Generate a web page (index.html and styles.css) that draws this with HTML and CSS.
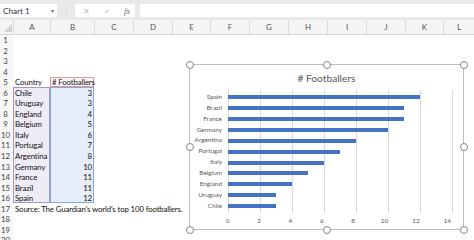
FILE: index.html
```html
<!DOCTYPE html>
<html>
<head>
<meta charset="utf-8">
<link rel="stylesheet" href="styles.css">
</head>
<body>
<div class="app">
  <div class="toolbar">
    <div class="namebox"><span>Chart 1</span><span class="caret">&#9662;</span></div>
    <div class="grip">&#8942;</div>
    <div class="fxbox"><span class="tb-x">&#10005;</span><span class="tb-check">&#10003;</span><span class="tb-fx">fx</span></div>
    <div class="formula"></div>
  </div>
  <div class="sheet">
    <div class="row hdr">
      <div class="corner"><span class="tri"></span></div>
      <div class="ch">A</div><div class="ch">B</div><div class="ch">C</div><div class="ch">D</div>
      <div class="ch">E</div><div class="ch">F</div><div class="ch">G</div><div class="ch">H</div>
      <div class="ch">I</div><div class="ch">J</div><div class="ch">K</div><div class="ch">L</div>
    </div>
    <div class="row"><div class="rh">1</div></div>
    <div class="row"><div class="rh">2</div></div>
    <div class="row"><div class="rh">3</div></div>
    <div class="row"><div class="rh">4</div></div>
    <div class="row"><div class="rh">5</div><div class="c">Country</div><div class="c ser">#&nbsp;Footballers</div></div>
    <div class="row"><div class="rh">6</div><div class="c cat cat-top">Chile</div><div class="c val val-top">3</div></div>
    <div class="row"><div class="rh">7</div><div class="c cat">Uruguay</div><div class="c val">3</div></div>
    <div class="row"><div class="rh">8</div><div class="c cat">England</div><div class="c val">4</div></div>
    <div class="row"><div class="rh">9</div><div class="c cat">Belgium</div><div class="c val">5</div></div>
    <div class="row"><div class="rh">10</div><div class="c cat">Italy</div><div class="c val">6</div></div>
    <div class="row"><div class="rh">11</div><div class="c cat">Portugal</div><div class="c val">7</div></div>
    <div class="row"><div class="rh">12</div><div class="c cat">Argentina</div><div class="c val">8</div></div>
    <div class="row"><div class="rh">13</div><div class="c cat">Germany</div><div class="c val">10</div></div>
    <div class="row"><div class="rh">14</div><div class="c cat">France</div><div class="c val">11</div></div>
    <div class="row"><div class="rh">15</div><div class="c cat">Brazil</div><div class="c val">11</div></div>
    <div class="row"><div class="rh">16</div><div class="c cat cat-bot">Spain</div><div class="c val val-bot">12</div></div>
    <div class="row"><div class="rh">17</div><div class="c spill">Source: The Guardian's world's top 100 footballers.</div></div>
    <div class="row"><div class="rh">18</div></div>
    <div class="row"><div class="rh">19</div></div>
    <div class="row"><div class="rh">20</div></div>
  </div>

  <div class="chart">
    <div class="chart-title"># Footballers</div>
    <div class="plot">
      <div class="cats">
        <div>Spain</div><div>Brazil</div><div>France</div><div>Germany</div><div>Argentina</div><div>Portugal</div>
        <div>Italy</div><div>Belgium</div><div>England</div><div>Uruguay</div><div>Chile</div>
      </div>
      <div class="bars">
        <div class="bar-row"><div class="bar" style="width:192px"></div></div>
        <div class="bar-row"><div class="bar" style="width:176px"></div></div>
        <div class="bar-row"><div class="bar" style="width:176px"></div></div>
        <div class="bar-row"><div class="bar" style="width:160px"></div></div>
        <div class="bar-row"><div class="bar" style="width:128px"></div></div>
        <div class="bar-row"><div class="bar" style="width:112px"></div></div>
        <div class="bar-row"><div class="bar" style="width:96px"></div></div>
        <div class="bar-row"><div class="bar" style="width:80px"></div></div>
        <div class="bar-row"><div class="bar" style="width:64px"></div></div>
        <div class="bar-row"><div class="bar" style="width:48px"></div></div>
        <div class="bar-row"><div class="bar" style="width:48px"></div></div>
      </div>
    </div>
    <div class="axis">
      <span>0</span><span>2</span><span>4</span><span>6</span><span>8</span><span>10</span><span>12</span><span>14</span>
    </div>
    <span class="handle h-tl"></span><span class="handle h-tm"></span><span class="handle h-tr"></span>
    <span class="handle h-ml"></span><span class="handle h-mr"></span>
    <span class="handle h-bl"></span><span class="handle h-bm"></span><span class="handle h-br"></span>
  </div>
</div>
</body>
</html>
```

FILE: styles.css
```css
* { box-sizing: border-box; }
html, body { margin: 0; padding: 0; }
body {
  width: 474px;
  height: 240px;
  overflow: hidden;
  background: #ffffff;
  font-family: Lato, "Open Sans", "Liberation Sans", sans-serif;
}
.app {
  position: relative;
  width: 474px;
  height: 240px;
  overflow: hidden;
}

/* formula bar */
.toolbar {
  height: 20px;
  background: #e9e9e9;
  padding-top: 4px;
  padding-bottom: 3px;
  display: flex;
  align-items: stretch;
}
.namebox {
  width: 57px;
  background: #fff;
  display: flex;
  align-items: center;
  justify-content: space-between;
  padding: 0 3px 0 3px;
  font-size: 8.2px;
  color: #333;
}
.caret { font-size: 6px; color: #666; }
.grip {
  width: 18px;
  text-align: center;
  font-size: 8px;
  line-height: 13px;
  color: #c4c4c4;
}
.fxbox {
  width: 60px;
  background: #fff;
  display: flex;
  align-items: center;
  padding-left: 8px;
}
.tb-x { width: 21px; font-size: 8px; color: #b8b8b8; }
.tb-check { width: 20px; font-size: 8px; color: #b8b8b8; }
.tb-fx { font-family: "Liberation Serif", serif; font-style: italic; font-size: 8.5px; color: #666; }
.formula {
  flex: 1;
  margin-left: 5px;
  background: #fff;
}

/* sheet grid */
.sheet { display: flex; flex-direction: column; }
.row {
  display: grid;
  grid-template-columns: 13px 37px 44px 39px 39px 38px 39px 39px 39px 39px 39px 38px 31px;
  height: 10.55px;
  font-size: 7.8px;
  color: #111;
}
.row.hdr {
  height: 14.7px;
  background: #f4f4f4;
  border-bottom: 1px solid #d8d8d8;
}
.corner { position: relative; }
.tri {
  position: absolute;
  right: 1px;
  bottom: 2px;
  width: 0;
  height: 0;
  border-left: 8px solid transparent;
  border-bottom: 8px solid #cfcfcf;
}
.ch {
  display: flex;
  align-items: center;
  justify-content: center;
  color: #555;
  font-size: 8px;
  border-left: 1px solid #dadada;
}
.rh {
  display: flex;
  align-items: center;
  justify-content: center;
  color: #444;
  font-size: 7.8px;
  background: #f7f7f7;
  padding-right: 2px;
}
.c {
  display: flex;
  align-items: center;
  padding: 0 1px 0 2px;
  white-space: nowrap;
  line-height: 10px;
  letter-spacing: -0.12px;
}
.ser {
  box-shadow: inset 0 0 0 1px #e29a9a;
  background: #fdf7f7;
}
.cat {
  background: #efecf6;
  box-shadow: inset 1px 0 0 #a797cf, inset -1px 0 0 #a797cf;
}
.cat-top { box-shadow: inset 1px 0 0 #a797cf, inset -1px 0 0 #a797cf, inset 0 1px 0 #a797cf; }
.cat-bot { box-shadow: inset 1px 0 0 #a797cf, inset -1px 0 0 #a797cf, inset 0 -1px 0 #a797cf; }
.val {
  justify-content: flex-end;
  padding-right: 2px;
  background: #e6eef9;
  box-shadow: inset 1px 0 0 #86a8dc, inset -1px 0 0 #86a8dc;
}
.val-top { box-shadow: inset 1px 0 0 #86a8dc, inset -1px 0 0 #86a8dc, inset 0 1px 0 #86a8dc; }
.val-bot { box-shadow: inset 1px 0 0 #86a8dc, inset -1px 0 0 #86a8dc, inset 0 -1px 0 #86a8dc; }
.spill { overflow: visible; }

/* chart */
.chart {
  position: absolute;
  left: 189px;
  top: 64px;
  width: 275px;
  height: 166px;
  border: 1px solid #bdbdbd;
  background: #fff;
  color: #595959;
}
.chart-title {
  padding-top: 7px;
  height: 19px;
  line-height: 12px;
  font-size: 10.2px;
  text-align: center;
  color: #595959;
}
.plot {
  margin-top: 6px;
  height: 123px;
  display: flex;
  gap: 6px;
}
.cats {
  width: 32px;
  padding-top: 2px;
  display: flex;
  flex-direction: column;
  font-size: 6.4px;
  text-align: right;
}
.cats div {
  height: 10.87px;
  line-height: 10.87px;
  white-space: nowrap;
}
.bars {
  width: 225px;
  padding-top: 2px;
  background: repeating-linear-gradient(to right, #d9d9d9 0 1px, transparent 1px 32px);
}
.bar-row {
  height: 10.87px;
  display: flex;
  align-items: center;
}
.bar {
  height: 4px;
  background: #4472c4;
}
.axis {
  margin-top: 3px;
  margin-left: 22px;
  display: flex;
  font-size: 6.4px;
  line-height: 10px;
}
.axis span {
  width: 32px;
  text-align: center;
}
.handle {
  position: absolute;
  width: 8px;
  height: 8px;
  border: 1px solid #858585;
  border-radius: 50%;
  background: #fff;
}
.h-tl { left: -4.5px; top: -4.5px; }
.h-tm { left: calc(50% - 4px); top: -4.5px; }
.h-tr { right: -4.5px; top: -4.5px; }
.h-ml { left: -4.5px; top: calc(50% - 4px); }
.h-mr { right: -4.5px; top: calc(50% - 4px); }
.h-bl { left: -4.5px; bottom: -4.5px; }
.h-bm { left: calc(50% - 4px); bottom: -4.5px; }
.h-br { right: -4.5px; bottom: -4.5px; }
```
